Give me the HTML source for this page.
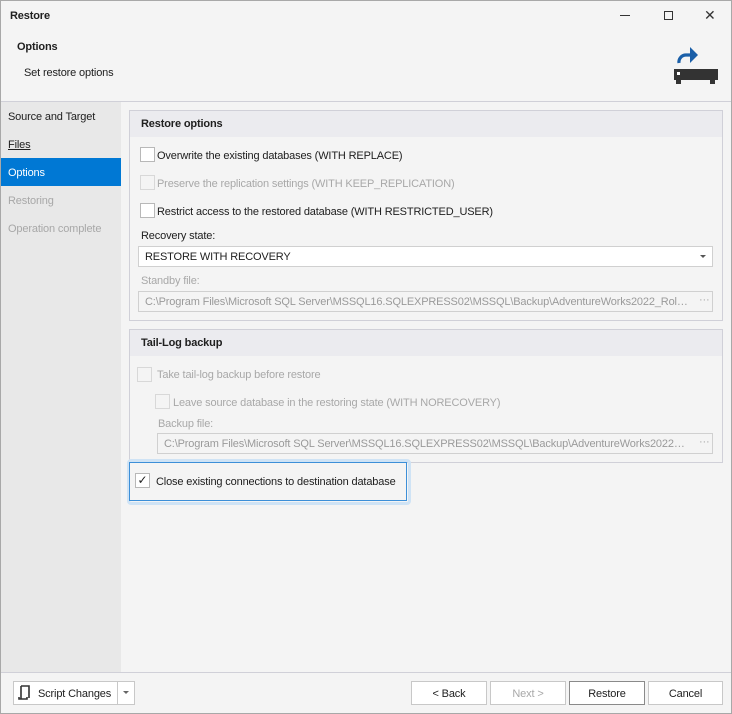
<!DOCTYPE html><html><head><style>
*{box-sizing:border-box;margin:0;padding:0}
body{width:732px;height:714px;position:relative;background:#f4f4f4;font-family:"Liberation Sans",sans-serif;font-size:11px;letter-spacing:-0.15px;color:#202020;overflow:hidden}
.a{position:absolute;white-space:nowrap}
.win{left:0;top:0;width:732px;height:714px;border:1px solid #a8a8a8}
.cb{position:absolute;width:15px;height:15px;border:1px solid #b8b8b8;background:#fff}
.cb.d{border-color:#d8d8d8;background:#f4f4f4}
.dis{color:#a8a8a8}
.grp{position:absolute;border:1px solid #d0d0d8;background:#f4f4f4}
.gh{height:26px;background:#ebebef;font-weight:bold;padding:7px 0 0 11px}
.in{position:absolute;height:21px;border:1px solid #d0d0d0;background:#f4f4f4;padding:4px 24px 0 6px;white-space:nowrap;overflow:hidden;text-overflow:ellipsis;color:#9a9a9a}
.btn{position:absolute;top:681px;height:24px;border:1px solid #c8c8c8;background:#fff;text-align:center;padding-top:6px}
</style></head><body>
<div class="a win"></div>
<div class="a" style="left:10px;top:10px;font-weight:bold">Restore</div>
<div class="a" style="left:620px;top:15px;width:10px;height:1px;background:#333"></div>
<div class="a" style="left:664px;top:11px;width:9px;height:9px;border:1px solid #333"></div>
<div class="a" style="left:704px;top:7px;font-size:14px;color:#333">✕</div>
<div class="a" style="left:17px;top:41px;font-weight:bold">Options</div>
<div class="a" style="left:24px;top:67px">Set restore options</div>
<svg class="a" style="left:672px;top:44px" width="48" height="40" viewBox="0 0 48 40"><path d="M7 19 A7 7 0 0 1 14 11 L21 11" stroke="#1a5fa8" stroke-width="3.2" fill="none"/><path d="M18 3 L26 11 L18 19 Z" fill="#1a5fa8"/><rect x="2" y="25" width="44" height="11" fill="#333"/><rect x="5" y="28" width="3" height="3" fill="#fff"/><rect x="4" y="36" width="5" height="4" fill="#333"/><rect x="38" y="36" width="5" height="4" fill="#333"/></svg>
<div class="a" style="left:1px;top:101px;width:730px;height:1px;background:#d0d0d8"></div>
<div class="a" style="left:1px;top:102px;width:120px;height:570px;background:#e8e8e8"></div>
<div class="a" style="left:8px;top:111px">Source and Target</div>
<div class="a" style="left:8px;top:139px;text-decoration:underline">Files</div>
<div class="a" style="left:1px;top:158px;width:120px;height:28px;background:#0078d4"></div>
<div class="a" style="left:8px;top:167px;color:#fff">Options</div>
<div class="a dis" style="left:8px;top:195px">Restoring</div>
<div class="a dis" style="left:8px;top:223px">Operation complete</div>

<div class="grp" style="left:129px;top:110px;width:594px;height:211px"><div class="gh">Restore options</div></div>
<div class="cb" style="left:140px;top:147px"></div><div class="a" style="left:157px;top:150px">Overwrite the existing databases (WITH REPLACE)</div>
<div class="cb d" style="left:140px;top:175px"></div><div class="a dis" style="left:157px;top:178px">Preserve the replication settings (WITH KEEP_REPLICATION)</div>
<div class="cb" style="left:140px;top:203px"></div><div class="a" style="left:157px;top:206px">Restrict access to the restored database (WITH RESTRICTED_USER)</div>
<div class="a" style="left:141px;top:230px">Recovery state:</div>
<div class="in" style="left:138px;top:246px;width:575px;background:#fff;color:#202020">RESTORE WITH RECOVERY</div>
<div class="a" style="left:700px;top:255px;border-left:3px solid transparent;border-right:3px solid transparent;border-top:3px solid #555"></div>
<div class="a dis" style="left:141px;top:275px">Standby file:</div>
<div class="in" style="left:138px;top:291px;width:575px">C:\Program Files\Microsoft SQL Server\MSSQL16.SQLEXPRESS02\MSSQL\Backup\AdventureWorks2022_Rollba...</div>
<div class="a dis" style="left:699px;top:294px">···</div>

<div class="grp" style="left:129px;top:329px;width:594px;height:134px"><div class="gh">Tail-Log backup</div></div>
<div class="cb d" style="left:137px;top:367px"></div><div class="a dis" style="left:157px;top:369px">Take tail-log backup before restore</div>
<div class="cb d" style="left:155px;top:394px"></div><div class="a dis" style="left:173px;top:397px">Leave source database in the restoring state (WITH NORECOVERY)</div>
<div class="a dis" style="left:158px;top:418px">Backup file:</div>
<div class="in" style="left:157px;top:433px;width:556px">C:\Program Files\Microsoft SQL Server\MSSQL16.SQLEXPRESS02\MSSQL\Backup\AdventureWorks2022_Lo...</div>
<div class="a dis" style="left:699px;top:436px">···</div>

<div class="a" style="left:127px;top:459px;width:284px;height:46px;border:3px solid #cfe3f5;border-radius:4px"></div>
<div class="a" style="left:129px;top:462px;width:278px;height:39px;border:1px solid #3c8fd8;background:#f4f4f4"></div>
<div class="cb" style="left:135px;top:473px;font-size:12px;line-height:13px;text-align:center">✓</div>
<div class="a" style="left:156px;top:476px">Close existing connections to destination database</div>

<div class="a" style="left:1px;top:672px;width:730px;height:1px;background:#d0d0d8"></div>
<div class="btn" style="left:13px;width:122px;text-align:left;padding-left:24px">Script Changes</div>
<div class="a" style="left:117px;top:682px;width:1px;height:22px;background:#c8c8c8"></div>
<div class="a" style="left:123px;top:691px;border-left:3px solid transparent;border-right:3px solid transparent;border-top:3px solid #666"></div>
<svg class="a" style="left:18px;top:685px" width="12" height="16" viewBox="0 0 12 16"><path d="M3 1 H11 V13 M3 1 V14 H1 V12 M3 14 H9 V12" stroke="#333" stroke-width="1.6" fill="none"/></svg>
<div class="btn" style="left:411px;width:76px">&lt; Back</div>
<div class="btn dis" style="left:490px;width:76px">Next &gt;</div>
<div class="btn" style="left:569px;width:76px;border-color:#8a8a8a">Restore</div>
<div class="btn" style="left:648px;width:75px">Cancel</div>
</body></html>
